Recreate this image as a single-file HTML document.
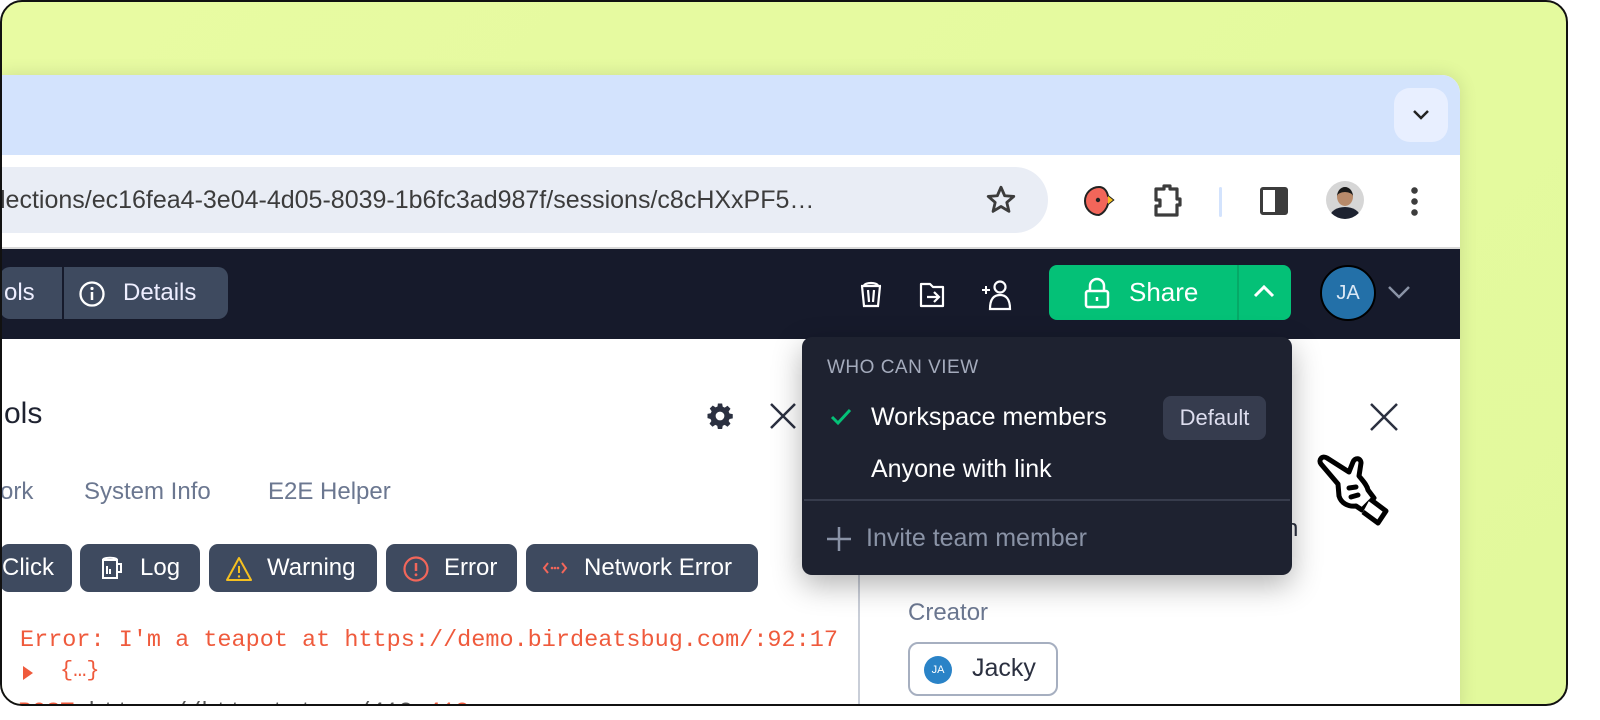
<!DOCTYPE html>
<html><head><meta charset="utf-8"><style>
*{margin:0;padding:0;box-sizing:border-box}
html,body{width:1600px;height:720px;overflow:hidden;background:#fff}
body{font-family:"Liberation Sans",sans-serif;position:relative}
.frame{position:absolute;left:0;top:0;width:1568px;height:706px;border:2px solid #111;border-radius:22px;overflow:hidden;background:linear-gradient(135deg,#e8fba2,#e2f99c)}
.a{position:absolute}
.win{left:-2px;top:73px;width:1460px;height:640px;border-radius:0 18px 0 0;overflow:hidden;background:#fff;box-shadow:0 0 18px rgba(0,0,0,.12)}
.tabbar{left:0;top:0;width:1460px;height:80px;background:#d3e3fd}
.tb{left:0;top:80px;width:1460px;height:90px;background:#fff}
.url{left:0;top:92px;width:1048px;height:66px;background:#e9edf5;border-radius:0 33px 33px 0;font-size:25px;color:#3c3c3c;line-height:66px}
.hdr{left:0;top:172px;width:1460px;height:92px;background:#161a2b;border-top:2px solid #d9d9d9}
.pill{background:#3e4a5f;color:#eef;border-radius:10px;font-size:24px}
.tab{color:#6b7790;font-size:24px}
.chip{top:469px;height:48px;background:#3e4a5f;border-radius:9px;color:#fff;font-size:24px;line-height:48px}
.mono{font-family:"Liberation Mono",monospace;color:#ef5a3c;font-size:23.5px}
.menu{left:800px;top:335px;width:490px;height:238px;background:#1e2230;border-radius:10px;box-shadow:0 10px 30px rgba(0,0,0,.3);color:#fff}
</style></head><body>
<div class="frame">
<div class="a win">
 <div class="a tabbar"></div>
 <div class="a" style="left:1394px;top:13px;width:54px;height:54px;background:#e8efff;border-radius:16px"></div>
 <svg class="a" style="left:1410px;top:30px" width="22" height="20"><path d="M4 6l7 7 7-7" stroke="#222" stroke-width="2.5" fill="none"/></svg>
 <div class="a tb"></div>
 <div class="a url">lections/ec16fea4-3e04-4d05-8039-1b6fc3ad987f/sessions/c8cHXxPF5…</div>
 <svg class="a" style="left:984px;top:108px" width="34" height="34" viewBox="0 0 24 24"><path d="M12 3l2.6 6 6.4.5-4.9 4.2 1.5 6.3L12 16.6 6.4 20l1.5-6.3L3 9.5 9.4 9z" stroke="#3c3c3c" stroke-width="2" fill="none" stroke-linejoin="round"/></svg>
 <svg class="a" style="left:1080px;top:108px" width="36" height="36"><path d="M19 4a13 13 0 1 0 0 28 C24 30 27 25 28 21 L33 17 L28 13 C27 8 24 4 19 4z" fill="#f2665a" stroke="#222" stroke-width="2"/><path d="M28 13 L33 17 L28 21z" fill="#f5c020"/><circle cx="18" cy="17" r="2.2" fill="#222"/></svg>
 <svg class="a" style="left:1150px;top:106px" width="40" height="40" viewBox="0 0 40 40"><path d="M6 8h8v-3h6v3h7v10h3v6h-3v10H6v-9h4v-6H6z" stroke="#3c3c3c" stroke-width="3.2" fill="none" stroke-linejoin="round"/></svg>
 <div class="a" style="left:1219px;top:112px;width:3px;height:30px;background:#d3e3fd;border-radius:2px"></div>
 <div class="a" style="left:1260px;top:112px;width:28px;height:28px;border:3px solid #3c3c3c;border-radius:3px"><div style="position:absolute;right:0;top:0;width:10px;height:100%;background:#3c3c3c"></div></div>
 <div class="a" style="left:1326px;top:106px;width:38px;height:38px;border-radius:50%;overflow:hidden;background:#d6d6d6">
  <div style="position:absolute;left:11px;top:6px;width:16px;height:19px;border-radius:50%;background:#b88a6a;border-top:5px solid #1a1a1a"></div>
  <div style="position:absolute;left:4px;top:26px;width:30px;height:20px;border-radius:50% 50% 0 0;background:#1d2230"></div>
 </div>
 <div class="a" style="left:1411px;top:110px;width:7px;height:32px;background:radial-gradient(circle,#3c3c3c 3px,transparent 3.5px) 0 0/7px 11px"></div>
 <div class="a hdr"></div>
 <div class="a pill" style="left:0;top:192px;width:228px;height:52px"></div>
 <div class="a" style="left:62px;top:192px;width:2px;height:52px;background:#161a2b"></div>
 <div class="a" style="left:4px;top:204px;color:#eef;font-size:24px">ols</div>
 <svg class="a" style="left:78px;top:205px" width="28" height="28"><circle cx="14" cy="14" r="11.5" stroke="#fff" stroke-width="2.3" fill="none"/><path d="M14 12v8" stroke="#fff" stroke-width="2.5"/><circle cx="14" cy="8.5" r="1.6" fill="#fff"/></svg>
 <div class="a" style="left:123px;top:204px;color:#eef;font-size:24px">Details</div>
 <svg class="a" style="left:857px;top:205px" width="28" height="30" viewBox="0 0 28 30"><path d="M4 6h20M5 6l2 20h14l2-20M11 10l1 12M17 10l-1 12M7 6c0-4 14-4 14 0" stroke="#fff" stroke-width="2.2" fill="none"/></svg>
 <svg class="a" style="left:918px;top:205px" width="30" height="30"><path d="M3 4h9l3 3h10v19H3z" stroke="#fff" stroke-width="2.2" fill="none" stroke-linejoin="round"/><path d="M9 17h11M16 12l5 5-5 5" stroke="#fff" stroke-width="2.2" fill="none"/></svg>
 <svg class="a" style="left:980px;top:203px" width="34" height="34"><path d="M2 12h8M6 8v8" stroke="#fff" stroke-width="2"/><circle cx="20" cy="9" r="5.5" stroke="#fff" stroke-width="2.2" fill="none"/><path d="M10 31c0-10 4-14 10-14s10 4 10 14z" stroke="#fff" stroke-width="2.2" fill="none"/></svg>
 <div class="a" style="left:1049px;top:190px;width:242px;height:55px;background:#04c177;border-radius:8px"></div>
 <div class="a" style="left:1237px;top:190px;width:2px;height:55px;background:#06a967"></div>
 <svg class="a" style="left:1083px;top:202px" width="28" height="32"><path d="M7 14V9a7 7 0 0 1 14 0v5" stroke="#fff" stroke-width="2.5" fill="none"/><rect x="3" y="14" width="22" height="16" rx="2" stroke="#fff" stroke-width="2.5" fill="none"/><path d="M14 20v4" stroke="#fff" stroke-width="2.5"/></svg>
 <div class="a" style="left:1129px;top:202px;color:#fff;font-size:26px">Share</div>
 <svg class="a" style="left:1252px;top:206px" width="24" height="20"><path d="M3 15l9-9 9 9" stroke="#fff" stroke-width="3" fill="none"/></svg>
 <div class="a" style="left:1320px;top:190px;width:56px;height:56px;border-radius:50%;background:#2370a8;border:2px solid #000;color:#dbe8f5;font-size:20px;text-align:center;line-height:52px">JA</div>
 <svg class="a" style="left:1386px;top:208px" width="26" height="18"><path d="M3 4l10 10 10-10" stroke="#8a93a6" stroke-width="2.5" fill="none"/></svg>
 <div class="a" style="left:4px;top:322px;font-size:30px;color:#1e2230">ols</div>
 <svg class="a" style="left:705px;top:326px" width="30" height="30" viewBox="0 0 24 24"><path fill="#2b3040" d="M10.3 2h3.4l.5 2.6 1.6.7 2.2-1.5 2.4 2.4-1.5 2.2.7 1.6 2.6.5v3.4l-2.6.5-.7 1.6 1.5 2.2-2.4 2.4-2.2-1.5-1.6.7-.5 2.6h-3.4l-.5-2.6-1.6-.7-2.2 1.5-2.4-2.4 1.5-2.2-.7-1.6L2 13.7v-3.4l2.6-.5.7-1.6-1.5-2.2 2.4-2.4 2.2 1.5 1.6-.7zM12 8.5a3.5 3.5 0 1 0 0 7 3.5 3.5 0 0 0 0-7z"/></svg>
 <svg class="a" style="left:768px;top:326px" width="30" height="30"><path d="M3 3l24 24M27 3L3 27" stroke="#2b3040" stroke-width="2.5"/></svg>
 <div class="a tab" style="left:0;top:403px">ork</div>
 <div class="a tab" style="left:84px;top:403px">System Info</div>
 <div class="a tab" style="left:268px;top:403px">E2E Helper</div>
 <div class="a chip" style="left:0;width:72px;padding-left:2px">Click</div>
 <div class="a chip" style="left:80px;width:120px;padding-left:60px">Log</div>
 <svg class="a" style="left:98px;top:480px" width="28" height="28"><path d="M5 5h14v18H5zM19 9h4v8h-4M5 5c0-3 14-3 14 0M9 11v8M12 14v5" stroke="#fff" stroke-width="2" fill="none"/></svg>
 <div class="a chip" style="left:209px;width:168px;padding-left:58px">Warning</div>
 <svg class="a" style="left:226px;top:481px" width="26" height="26"><path d="M13 2L25 24H1z" stroke="#f5c020" stroke-width="2" fill="none" stroke-linejoin="round"/><path d="M13 10v7" stroke="#f5c020" stroke-width="2"/><circle cx="13" cy="20.5" r="1.2" fill="#f5c020"/></svg>
 <div class="a chip" style="left:386px;width:131px;padding-left:58px">Error</div>
 <svg class="a" style="left:402px;top:480px" width="28" height="28"><circle cx="14" cy="14" r="11.5" stroke="#f2665a" stroke-width="2.2" fill="none"/><path d="M14 8v8" stroke="#f2665a" stroke-width="2.5"/><circle cx="14" cy="19.8" r="1.4" fill="#f2665a"/></svg>
 <div class="a chip" style="left:526px;width:232px;padding-left:58px">Network Error</div>
 <svg class="a" style="left:542px;top:484px" width="26" height="18"><path d="M6 4L2 9l4 5M20 4l4 5-4 5" stroke="#f2665a" stroke-width="2" fill="none"/><circle cx="10" cy="9" r="1.3" fill="#f2665a"/><circle cx="13" cy="9" r="1.3" fill="#f2665a"/><circle cx="16" cy="9" r="1.3" fill="#f2665a"/></svg>
 <div class="a mono" style="left:20px;top:552px">Error: I'm a teapot at https://demo.birdeatsbug.com/:92:17</div>
 <svg class="a" style="left:20px;top:588px" width="16" height="20"><path d="M3 3l10 7-10 7z" fill="#ef5a3c"/></svg>
 <div class="a mono" style="left:60px;top:583px;font-size:22px">{…}</div>
 <div class="a mono" style="left:18px;top:624px;color:#ef5a3c">POST <span style="color:#555">https://httpstat.us/418</span> 418</div>
 <div class="a" style="left:858px;top:264px;width:2px;height:400px;background:#c9ced8"></div>
 <svg class="a" style="left:1368px;top:326px" width="32" height="32"><path d="M3 3l26 26M29 3L3 29" stroke="#2b3040" stroke-width="2.5"/></svg>
 <div class="a" style="left:1285px;top:440px;font-size:24px;color:#2b3040">n</div>
 <div class="a" style="left:908px;top:524px;font-size:24px;color:#6b7790">Creator</div>
 <div class="a" style="left:908px;top:567px;width:150px;height:54px;border:2px solid #a6afc0;border-radius:10px"></div>
 <div class="a" style="left:924px;top:581px;width:28px;height:28px;border-radius:50%;background:#2a83c7;color:#fff;font-size:11px;text-align:center;line-height:28px">JA</div>
 <div class="a" style="left:972px;top:579px;font-size:25px;color:#2b3040">Jacky</div>
</div>
<svg class="a" style="left:1312px;top:448px" width="90" height="80" viewBox="0 0 90 80">
 <path d="M7 14c-3-4 1-9 6-6l22 14 4-10c2-5 8-4 8 1l-2 13c4 5 8 9 9 14l6 8-12 12-6-4c-8 1-15-3-17-10l-1-12z" fill="#fff" stroke="#000" stroke-width="5" stroke-linejoin="round"/>
 <path d="M56 49l16 12-8 12-15-11" fill="#fff" stroke="#000" stroke-width="5" stroke-linejoin="round"/>
 <path d="M35 38l7-1M37 47l7-2" stroke="#000" stroke-width="5" stroke-linecap="round"/>
</svg>
<div class="a menu">
 <div class="a" style="left:25px;top:20px;font-size:19px;color:#a4abbc;letter-spacing:.5px">WHO CAN VIEW</div>
 <svg class="a" style="left:27px;top:70px" width="24" height="20"><path d="M3 10l6 6L21 3" stroke="#04c177" stroke-width="3" fill="none"/></svg>
 <div class="a" style="left:69px;top:66px;font-size:25px">Workspace members</div>
 <div class="a" style="left:361px;top:59px;width:103px;height:44px;background:#363c4e;border-radius:8px;color:#dde;font-size:22px;text-align:center;line-height:44px">Default</div>
 <div class="a" style="left:69px;top:118px;font-size:25px">Anyone with link</div>
 <div class="a" style="left:2px;top:162px;width:486px;height:2px;background:#373c4c"></div>
 <svg class="a" style="left:23px;top:188px" width="28" height="28"><path d="M14 2v24M2 14h24" stroke="#8a93a6" stroke-width="2.5"/></svg>
 <div class="a" style="left:64px;top:187px;font-size:25px;color:#8a93a6">Invite team member</div>
</div>
</div>
</body></html>
